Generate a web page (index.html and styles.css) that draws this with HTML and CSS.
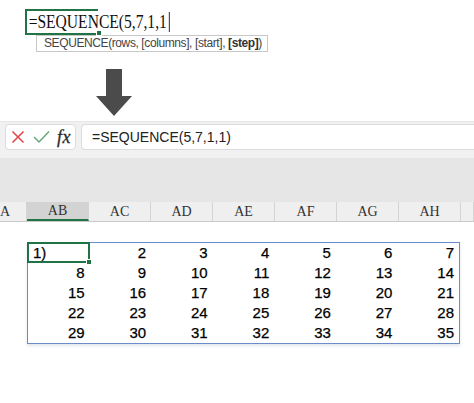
FILE: index.html
```html
<!DOCTYPE html>
<html>
<head>
<meta charset="utf-8">
<link rel="stylesheet" href="styles.css">
</head>
<body>
<div class="top">
  <div class="cell"><span class="cell-text">=SEQUENCE(5,7,1,1<span class="caret"></span></span><span class="cell-handle"></span></div>
  <div class="tip">SEQUENCE(rows, [columns], [start], <b>[step]</b>)</div>
  <svg class="arrow" width="36" height="48" viewBox="0 0 36 48"><polygon points="10,0 26,0 26,27 36,27 18,47 0,27 10,27" fill="#4b4b4b"/></svg>
</div>
<div class="fbar">
  <div class="fbtns">
    <svg class="ico" width="14" height="14" viewBox="0 0 14 14"><path d="M1.5 1.5 L12.5 12.5 M12.5 1.5 L1.5 12.5" stroke="#e2474a" stroke-width="1.6" fill="none"/></svg>
    <svg class="ico" width="17" height="14" viewBox="0 0 17 14"><path d="M1 7 L6 12 L16 1.5" stroke="#6aa77a" stroke-width="1.5" fill="none"/></svg>
    <span class="fx">fx</span>
  </div>
  <div class="finput">=SEQUENCE(5,7,1,1)</div>
</div>
<div class="band"></div>
<div class="heads">
  <div class="h cut">A</div>
  <div class="h sel">AB</div>
  <div class="h">AC</div>
  <div class="h">AD</div>
  <div class="h">AE</div>
  <div class="h">AF</div>
  <div class="h">AG</div>
  <div class="h">AH</div>
  <div class="h"></div>
</div>
<div class="sheet">
  <div class="grid">
    <div class="c first">1)</div><div class="c">2</div><div class="c">3</div><div class="c">4</div><div class="c">5</div><div class="c">6</div><div class="c">7</div>
    <div class="c">8</div><div class="c">9</div><div class="c">10</div><div class="c">11</div><div class="c">12</div><div class="c">13</div><div class="c">14</div>
    <div class="c">15</div><div class="c">16</div><div class="c">17</div><div class="c">18</div><div class="c">19</div><div class="c">20</div><div class="c">21</div>
    <div class="c">22</div><div class="c">23</div><div class="c">24</div><div class="c">25</div><div class="c">26</div><div class="c">27</div><div class="c">28</div>
    <div class="c">29</div><div class="c">30</div><div class="c">31</div><div class="c">32</div><div class="c">33</div><div class="c">34</div><div class="c">35</div>
    <div class="active"><span class="handle"></span></div>
  </div>
</div>
</body>
</html>
```
FILE: styles.css
```css
html, body {
  margin: 0;
  padding: 0;
  background: #ffffff;
  width: 474px;
  height: 403px;
  overflow: hidden;
}
body {
  font-family: "Liberation Sans", Arial, sans-serif;
  color: #111;
}
.top {
  height: 121px;
  padding-top: 9px;
  box-sizing: border-box;
}
.cell {
  position: relative;
  margin-left: 25px;
  width: 71px;
  height: 22px;
  border: 2px solid #217346;
  border-right: none;
  white-space: nowrap;
}
.cell-text {
  display: inline-block;
  font-family: "Liberation Serif", "Times New Roman", serif;
  font-size: 19px;
  line-height: 22px;
  color: #111;
  padding-left: 2px;
  transform: scaleX(0.82);
  transform-origin: left center;
}
.caret {
  display: inline-block;
  width: 0;
  height: 20px;
  border-left: 1.3px solid #000;
  margin-left: 2px;
  vertical-align: -4px;
}
.cell-handle {
  position: absolute;
  left: 69px;
  bottom: -3px;
  width: 4px;
  height: 4px;
  background: #217346;
  border: 1px solid #fff;
}
.tip {
  display: inline-block;
  margin-left: 36px;
  height: 17px;
  box-sizing: border-box;
  border: 1px solid #c8c8c8;
  background: #fff;
  padding: 0 5px 0 7px;
  font-size: 12px;
  letter-spacing: -0.4px;
  line-height: 15px;
  color: #444;
  vertical-align: top;
  white-space: nowrap;
}
.tip b {
  color: #333;
}
.arrow {
  display: block;
  margin-left: 96px;
  margin-top: 16px;
}
.fbar {
  height: 37px;
  background: #f1f1f1;
  border-top: 1px solid #e6e6e6;
  display: flex;
  align-items: flex-start;
  gap: 5px;
  padding: 2px 0 0 5px;
  box-sizing: border-box;
  overflow: hidden;
}
.fbtns {
  width: 71px;
  height: 26px;
  box-sizing: border-box;
  background: #fff;
  border: 1px solid #dcdcdc;
  border-radius: 4px;
  display: flex;
  align-items: center;
  padding-left: 5px;
  gap: 8px;
}
.ico { display: block; }
.fx {
  font-family: "Liberation Serif", "Times New Roman", serif;
  font-style: italic;
  font-size: 18px;
  color: #2a2a2a;
  margin-left: -1px;
  letter-spacing: 0.5px;
  -webkit-text-stroke: 0.3px #2a2a2a;
}
.finput {
  flex: 1;
  height: 26px;
  box-sizing: border-box;
  background: #fff;
  border: 1px solid #dcdcdc;
  border-radius: 4px 0 0 4px;
  border-right: none;
  font-size: 14px;
  line-height: 24px;
  padding-left: 10px;
  color: #222;
}
.band {
  height: 44px;
  background: #e6e6e6;
}
.heads {
  display: grid;
  grid-template-columns: 27px repeat(7, 62px) 1fr;
  height: 20px;
  background: #efefef;
  border-bottom: 1px solid #c9c9c9;
  box-sizing: border-box;
}
.h {
  font-family: "Liberation Serif", "Times New Roman", serif;
  font-size: 14px;
  line-height: 19px;
  text-align: center;
  color: #333;
  border-right: 1px solid #d4d4d4;
  overflow: hidden;
}
.h.cut {
  text-align: left;
  padding-left: 0;
}
.h.sel {
  background: #d3d3d3;
  border-bottom: 2px solid #217346;
  line-height: 18px;
}
.sheet {
  padding: 20px 0 0 27px;
}
.grid {
  position: relative;
  width: 433px;
  box-sizing: border-box;
  border: 1px solid #6a8ccb;
  display: grid;
  grid-template-columns: repeat(7, 1fr);
  grid-auto-rows: 20px;
  box-shadow: 0 2px 3px rgba(90, 110, 150, 0.18);
}
.c {
  font-size: 15px;
  line-height: 20px;
  text-align: right;
  padding-right: 5px;
  color: #000;
  -webkit-text-stroke: 0.25px #000;
}
.c.first {
  text-align: left;
  padding-left: 5px;
}
.active {
  position: absolute;
  left: -1px;
  top: -1px;
  width: 63px;
  height: 21px;
  box-sizing: border-box;
  border: 2px solid #217346;
}
.handle {
  position: absolute;
  right: -4px;
  bottom: -4px;
  width: 4px;
  height: 4px;
  background: #217346;
  border: 1px solid #fff;
}
```
